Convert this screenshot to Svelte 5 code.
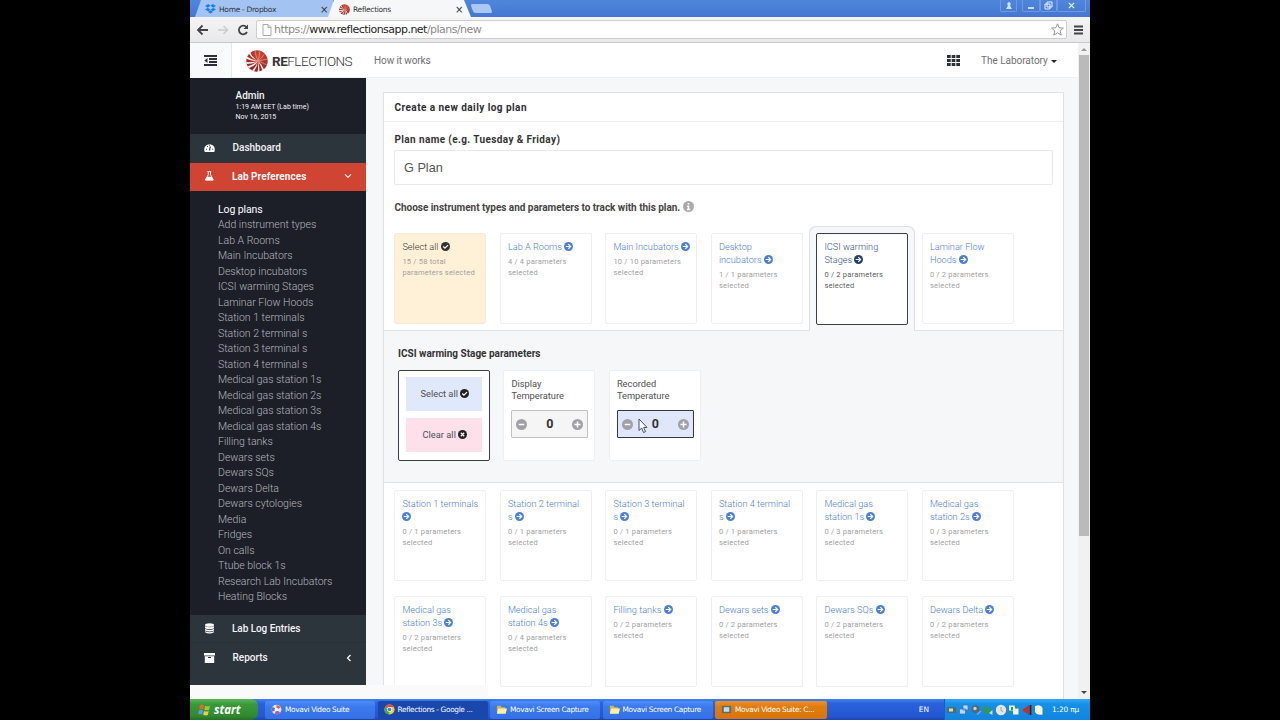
<script>
    const menu = [
        'Log plans', 'Add instrument types', 'Lab A Rooms', 'Main Incubators', 'Desktop incubators',
        'ICSI warming Stages', 'Laminar Flow Hoods', 'Station 1 terminals', 'Station 2 terminal s',
        'Station 3 terminal s', 'Station 4 terminal s', 'Medical gas station 1s', 'Medical gas station 2s',
        'Medical gas station 3s', 'Medical gas station 4s', 'Filling tanks', 'Dewars sets', 'Dewars SQs',
        'Dewars Delta', 'Dewars cytologies', 'Media', 'Fridges', 'On calls', 'Ttube block 1s',
        'Research Lab Incubators', 'Heating Blocks'
    ];

    // each title is split into the lines it wraps to
    const rows = [
        [
            { lines: ['Select all'], count: '15 / 58 total', rest: 'parameters selected', all: true },
            { lines: ['Lab A Rooms'], count: '4 / 4 parameters' },
            { lines: ['Main Incubators'], count: '10 / 10 parameters' },
            { lines: ['Desktop', 'incubators'], count: '1 / 1 parameters' },
            { lines: ['ICSI warming', 'Stages'], count: '0 / 2 parameters', open: true },
            { lines: ['Laminar Flow', 'Hoods'], count: '0 / 2 parameters' }
        ],
        [
            { lines: ['Station 1 terminals', ''], count: '0 / 1 parameters' },
            { lines: ['Station 2 terminal', 's'], count: '0 / 1 parameters' },
            { lines: ['Station 3 terminal', 's'], count: '0 / 1 parameters' },
            { lines: ['Station 4 terminal', 's'], count: '0 / 1 parameters' },
            { lines: ['Medical gas', 'station 1s'], count: '0 / 3 parameters' },
            { lines: ['Medical gas', 'station 2s'], count: '0 / 3 parameters' }
        ],
        [
            { lines: ['Medical gas', 'station 3s'], count: '0 / 2 parameters' },
            { lines: ['Medical gas', 'station 4s'], count: '0 / 4 parameters' },
            { lines: ['Filling tanks'], count: '0 / 2 parameters' },
            { lines: ['Dewars sets'], count: '0 / 2 parameters' },
            { lines: ['Dewars SQs'], count: '0 / 2 parameters' },
            { lines: ['Dewars Delta'], count: '0 / 2 parameters' }
        ]
    ];

    let params = $state([
        { name: 'Display', value: 0, hover: false },
        { name: 'Recorded', value: 0, hover: true }
    ]);

    let planName = $state('G Plan');
</script>

{#snippet dot(kind)}
    <svg class="dot" viewBox="0 0 16 16">
        <circle cx="8" cy="8" r="8" fill="currentColor" />
        {#if kind === 'arrow'}
            <path d="M3 8h8M7.6 3.8 11.8 8l-4.2 4.2" />
        {:else if kind === 'check'}
            <path d="M4 8l3 3 5.5-5.5" />
        {:else if kind === 'x'}
            <path d="M5 5l6 6M11 5l-6 6" />
        {:else if kind === 'minus'}
            <path d="M4 8h8" />
        {:else if kind === 'plus'}
            <path d="M3.5 8h9M8 3.5v9" />
        {:else}
            <path d="M8 3v2.2M6 7.5h2V12M5.7 12.2h4.8" />
        {/if}
    </svg>
{/snippet}

{#snippet logo()}
    <svg class="logo" viewBox="0 0 22 22">
        <defs>
            <radialGradient id="ball" cx=".6" cy=".25" r=".8">
                <stop offset="0" stop-color="#cf4a38" />
                <stop offset="1" stop-color="#8e1d1b" />
            </radialGradient>
        </defs>
        <circle cx="11" cy="11" r="10.7" fill="url(#ball)" />
        <path d="M12 11Q6 8 4 2L2.700 3.500Q6 9 12 11zM12 11Q5 9.500.8 6.500L0 8.500Q5 11 12 11zM12 11Q6 12.500.3 12L.6 14Q7 14 12 11zM12 11Q7 15 1.600 16.200L3 18Q9 16 12 11zM12 11Q10 17 6 20.500L8 21.500Q11 17 12 11zM12 11Q12.500 17 11.500 22H13.500Q13.500 16 12 11zM12 11Q15 16 16.500 20.500L18 19.500Q15.500 14 12 11z" fill="#fdf6f4" />
        <path d="M12 11Q9.500 6 9 .5M12 11Q13.500 6 14 .8M12 11Q16 8 18.500 3.800M12 11Q17 10 21.500 9M12 11Q17 13 21 15" stroke="#e9a093" stroke-width=".7" fill="none" />
    </svg>
{/snippet}

{#snippet folder()}
    <svg class="task-icon" viewBox="0 0 12 12">
        <path d="M1 2h4l1 1.500h4V10H1z" fill="#d9b44a" />
        <path d="M2.500 5H12l-1.500 5.500H1z" fill="#fff1a0" />
    </svg>
{/snippet}

{#snippet card(c)}
    <div class="card" class:all={c.all} class:open={c.open}>
        <div class="title">
            {#each c.lines as line, i}
                <div>{line}{#if i === c.lines.length - 1}{line ? ' ' : ''}{@render dot(c.all ? 'check' : 'arrow')}{/if}</div>
            {/each}
        </div>
        <div class="count">{c.count}<br />{c.rest ?? 'selected'}</div>
    </div>
{/snippet}

<div class="stage">
    <div class="screen">
        <div class="tabs">
            <div class="tab back">
                <svg width="11" height="10" viewBox="0 0 12 11"><path d="M3.500 0 6 2 3 4 0 2.200zM8.500 0 12 2.200 9 4 6 2zM0 6l3-2 3 2.200L3.500 8zM12 6 9 4 6 6.200 8.500 8zM3.200 8.700 6 7l2.800 1.700L6 10.500z" fill="#1c7fe0" /></svg>
                <span>Home - Dropbox</span>
                <b>×</b>
            </div>
            <div class="tab front">
                {@render logo()}
                <span>Reflections</span>
                <b>×</b>
            </div>
            <div class="newtab"></div>
            <div class="winbtns">
                <i><svg width="8" height="8" viewBox="0 0 8 8"><path d="M4 0a2 2 0 0 1 1 3.500L7 7H1l2-3.500A2 2 0 0 1 4 0z" fill="#cfe0fa" /></svg></i>
                <i class="wide"><svg width="8" height="8" viewBox="0 0 8 8"><path d="M1 6h6" stroke="#e8f0ff" stroke-width="1.600" /></svg></i>
                <i><svg width="9" height="9" viewBox="0 0 9 9"><path d="M3 1h5v5H3zM1 3h5v5H1z" stroke="#e8f0ff" fill="none" /></svg></i>
                <i class="last"><svg width="7" height="7" viewBox="0 0 8 8"><path d="M1 1l6 6M7 1 1 7" stroke="#e8f0ff" stroke-width="1.500" /></svg></i>
            </div>
        </div>

        <div class="toolbar">
            <svg width="60" height="14" viewBox="0 0 60 14" fill="none">
                <path d="M12 7H2M6.500 2.500 2 7l4.500 4.500" stroke="#444" stroke-width="1.800" />
                <path d="M22 7h9M27.500 3 31.500 7l-4 4" stroke="#ccc" stroke-width="1.600" />
                <path d="M50.500 4.200A4.300 4.300 0 1 0 51 9" stroke="#444" stroke-width="1.800" />
                <path d="M52 1.500V6h-4.500z" fill="#444" />
            </svg>
            <div class="url">
                <svg width="10" height="12" viewBox="0 0 10 12"><path d="M1 .5h5l3 3v8H1zM6 .5v3h3" fill="#fff" stroke="#aaa" /></svg>
                <span>https://<em>www.reflectionsapp.net</em>/plans/new</span>
                <svg class="star" width="13" height="13" viewBox="0 0 13 13"><path d="M6.500.8 8.200 4.800l4.200.3-3.200 2.800 1 4.200-3.700-2.300-3.700 2.300 1-4.200L.6 5.100l4.200-.3z" fill="#fff" stroke="#888" stroke-width=".9" /></svg>
            </div>
            <svg width="10" height="10" viewBox="0 0 10 10"><path d="M0 1.500h9M0 5h9M0 8.500h9" stroke="#444" stroke-width="2" /></svg>
        </div>

        <div class="page">
            <div class="site">
                <header>
                    <div class="toggle">
                        <svg width="13" height="11" viewBox="0 0 13 11"><path d="M0 1h13M5 4h8M5 7h8M0 10h13" stroke="#2d2f3d" stroke-width="1.800" /><path d="M3.500 3v5L.3 5.500z" fill="#2d2f3d" /></svg>
                    </div>
                    {@render logo()}
                    <div class="brand"><b>RE</b>FLECTIONS</div>
                    <a class="how" href="#how">How it works</a>
                    <svg class="grid" width="13" height="11" viewBox="0 0 13 11"><path d="M0 1.500h13M0 5.500h13M0 9.500h13" stroke="#2d2f3d" stroke-width="2.800" stroke-dasharray="3.700 .95" /></svg>
                    <div class="lab">The Laboratory</div>
                    <div class="caret"></div>
                </header>

                <div class="body">
                    <nav>
                        <div class="profile">
                            <b>Admin</b>
                            <span>1:19 AM EET (Lab time)</span>
                            <span>Nov 16, 2015</span>
                        </div>
                        <div class="item">
                            <svg width="11" height="10" viewBox="0 0 11 10"><path d="M.8 9A5.300 5.300 0 1 1 10.200 9z" fill="#fff" /><path d="M5.500 7.500 6.300 3.500" stroke="#2d353c" stroke-width="1.200" /><path d="M2 6.200h1M3 3.500h1M8.200 6.200h1M5 2.200h1" stroke="#2d353c" /></svg>
                            <span>Dashboard</span>
                        </div>
                        <div class="item active">
                            <svg width="11" height="10" viewBox="0 0 11 10"><path d="M3.200.3h4M4.300.5v3.200L1.300 9h8L6.500 3.700V.5" fill="none" stroke="#fff" /><path d="M3.300 5.800h4.200L9.300 9.300h-8z" fill="#fff" /></svg>
                            <span>Lab Preferences</span>
                            <svg class="arrow" width="8" height="6" viewBox="0 0 8 6"><path d="M1 1.300l3 3 3-3" stroke="#fff" stroke-width="1.100" fill="none" /></svg>
                        </div>
                        <ul>
                            {#each menu as entry, i}
                                <li class:current={i === 0}>{entry}</li>
                            {/each}
                        </ul>
                        <div class="item log">
                            <svg width="11" height="11" viewBox="0 0 11 11"><ellipse cx="5.500" cy="2" rx="4.500" ry="1.800" fill="#fff" /><path d="M1 3.200q4.500 2 9 0v2q-4.500 2-9 0zM1 6q4.500 2 9 0v1.400q-4.500 2-9 0zM1 8.300q4.500 2 9 0v1q-4.500 2.400-9 0z" fill="#fff" /></svg>
                            <span>Lab Log Entries</span>
                        </div>
                        <div class="item reports">
                            <svg width="11" height="10" viewBox="0 0 11 10"><path d="M0 0h11v2.600H0zM.8 3.200h9.400V10H.8z" fill="#fff" /><path d="M4 4.500h3" stroke="#2d353c" /></svg>
                            <span>Reports</span>
                            <svg class="arrow" width="6" height="8" viewBox="0 0 6 8"><path d="M4.500 1l-3 3 3 3" stroke="#fff" stroke-width="1.200" fill="none" /></svg>
                        </div>
                    </nav>

                    <main>
                        <section>
                            <h1>Create a new daily log plan</h1>
                            <div class="form">
                                <label for="plan">Plan name (e.g. Tuesday &amp; Friday)</label>
                                <input id="plan" bind:value={planName} />
                                <p>Choose instrument types and parameters to track with this plan. <span class="info">{@render dot('info')}</span></p>
                            </div>
                            <div class="cards first">
                                {#each rows[0] as c}{@render card(c)}{/each}
                            </div>
                            <div class="params">
                                <h2>ICSI warming Stage parameters</h2>
                                <div class="cards">
                                    <div class="card picks">
                                        <div class="pick yes">Select all {@render dot('check')}</div>
                                        <div class="pick no">Clear all {@render dot('x')}</div>
                                    </div>
                                    {#each params as p}
                                        <div class="card param">
                                            {p.name}<br />Temperature
                                            <div class="stepper" class:hover={p.hover}>
                                                <button aria-label="less" onclick={() => p.value--}>{@render dot('minus')}</button>
                                                <b>{p.value}</b>
                                                <button aria-label="more" onclick={() => p.value++}>{@render dot('plus')}</button>
                                            </div>
                                        </div>
                                    {/each}
                                </div>
                            </div>
                            <div class="cards second">
                                {#each rows[1] as c}{@render card(c)}{/each}
                            </div>
                            <div class="cards">
                                {#each rows[2] as c}{@render card(c)}{/each}
                            </div>
                        </section>
                    </main>
                </div>
            </div>
            <div class="scroll">
                <div class="up"></div>
                <div class="thumb"></div>
                <div class="down"></div>
            </div>
            <div class="status"></div>
        </div>

        <footer>
            <div class="start">
                <svg width="13" height="12" viewBox="0 0 13 12"><path d="M2 1q2.200-1 4 .3L5.200 5.500Q3.500 4.500 1.200 5.300z" fill="#f0622d" /><path d="M7 1.800q2.500 1 5 0L11 6q-2.500.8-4.700-.2z" fill="#8fce3c" /><path d="M1 6.300q2-1 4 .3L4.200 10.500Q2.500 9.500.2 10.300z" fill="#5c9bf5" /><path d="M6 7q2.500 1 4.800 0L9.800 11Q7.500 12 5.200 10.800z" fill="#fbc83a" /></svg>
                <span>start</span>
            </div>
            <div class="task t1">
                <svg class="task-icon" viewBox="0 0 12 12"><circle cx="6" cy="6" r="5.300" fill="#e8e4f4" /><path d="M6 6V1a5 5 0 0 1 4.500 3z" fill="#e0603a" /><path d="M6 6 1.500 8.500A5 5 0 0 1 2 3z" fill="#5577cc" /><path d="M6 6l4 3.500A5 5 0 0 1 4 10.700z" fill="#a85ab0" /><circle cx="6" cy="6" r="2" fill="#fff" /></svg>
                <span>Movavi Video Suite</span>
            </div>
            <div class="task t2">
                <svg class="task-icon" viewBox="0 0 12 12"><circle cx="6" cy="6" r="5.500" fill="#f6cc38" /><path d="M6 6 1.200 3.300A5.500 5.500 0 0 1 10.800 3.300L6 3.500z" fill="#e04a3a" /><path d="M6 8 1.200 3.300A5.500 5.500 0 0 0 5.500 11.500z" fill="#3fa653" /><circle cx="6" cy="6" r="2.700" fill="#fff" /><circle cx="6" cy="6" r="2" fill="#3d7fe8" /></svg>
                <span>Reflections - Google ...</span>
            </div>
            <div class="task t3">{@render folder()}<span>Movavi Screen Capture</span></div>
            <div class="task t4">{@render folder()}<span>Movavi Screen Capture</span></div>
            <div class="task t5">
                <svg class="task-icon" viewBox="0 0 12 12"><path d="M1 2h10v8H1z" fill="#5a6a70" /><path d="M3 3.500h6v5H3z" fill="#bde0e4" /></svg>
                <span>Movavi Video Suite: C...</span>
            </div>
            <div class="lang">EN</div>
            <div class="tray">
                <svg width="102" height="12" viewBox="0 0 102 12">
                    <path d="M2 3h9v6H2z" fill="#4d6b70" /><path d="M4 4.500h4v3H4z" fill="#e6d9a0" />
                    <path d="M18 1h5v5h-5zM14.500 5h6v5h-6z" fill="#b9d9f5" stroke="#3f75b8" stroke-width=".8" />
                    <circle cx="30.500" cy="5" r="3.900" fill="#59656f" /><circle cx="30" cy="4.500" r="1.700" fill="#c9d3da" /><path d="M32 10.500l4-3.500" stroke="#8fa4b4" stroke-width="1.600" />
                    <path d="M40 1l3 3 2-1 1 6-5 1-3-4z" fill="#2f9a4b" /><path d="M44 9l3.500-3v5z" fill="#c9d8d8" />
                    <circle cx="56" cy="6" r="5.200" fill="#e9e4dc" /><path d="M56 3v3.500l2 1" stroke="#a99" fill="none" />
                    <path d="M64 1.500h6v5h-6zM68 4.500h5.500v6H68z" fill="#e9f6e8" /><path d="M65.500 7l2 3M70 2l2 2M67 3v3" stroke="#37984a" stroke-width="2" />
                    <path d="M84 1v10l-7-5z" fill="#c62f22" /><path d="M85.500 1v10" stroke="#33202a" stroke-width="1.800" />
                    <path d="M90 2q6-2 7.500 2v6.500q-6 1-7.500-3z" fill="#f6fbd8" />
                </svg>
                <span>1:20 πμ</span>
            </div>
        </footer>

        <svg class="cursor" width="10" height="16" viewBox="0 0 10 16"><path d="M1 1v11.500l2.700-2.500L5.500 14.500l2-.9L5.700 9.400H9z" fill="#fff" stroke="#333a55" stroke-width=".9" /></svg>
    </div>
</div>

<style>
    :global(body) {
        background: #000;
    }
    .stage {
        display: flex;
        justify-content: center;
        width: 1280px;
        height: 720px;
        background: #000;
        overflow: hidden;
        font-family: Roboto, "Liberation Sans", sans-serif;
    }
    .stage * {
        box-sizing: border-box;
    }
    .screen {
        position: relative;
        display: flex;
        flex-direction: column;
        width: 900px;
        height: 720px;
        background: #fff;
    }
    svg {
        display: block;
        flex: none;
    }

    /* browser */
    .tabs {
        display: flex;
        height: 17px;
        padding-left: 5px;
        background: linear-gradient(#4f86dc, #4577cf);
        font: 7.500px "DejaVu Sans", sans-serif;
        letter-spacing: -0.3px;
    }
    .tab {
        display: flex;
        align-items: center;
        height: 17px;
        color: #333;
        white-space: nowrap;
    }
    .tab b {
        margin-left: auto;
        font-size: 10px;
        font-weight: 400;
    }
    .back {
        width: 138px;
        padding: 1px 5px 0 10px;
        background: #a3c3f3;
        clip-path: polygon(6px 0, 100% 0, 100% 100%, 0 100%);
    }
    .back svg {
        margin-right: 3px;
    }
    .front {
        width: 143px;
        margin-left: -5px;
        padding: 1px 8px 0 11px;
        background: #f6f7f9;
        clip-path: polygon(6px 0, 136px 0, 100% 100%, 0 100%);
    }
    .front .logo {
        width: 11px;
        height: 11px;
        margin-right: 3px;
    }
    .newtab {
        width: 19px;
        height: 9px;
        margin: 4px 0 0 1px;
        background: #a9c8f7;
        border-radius: 2px;
        transform: skewX(20deg);
    }
    .winbtns {
        display: flex;
        margin-left: auto;
        margin-right: 4px;
    }
    .winbtns i {
        display: flex;
        align-items: center;
        justify-content: center;
        width: 17px;
        height: 12px;
        border: 1px solid #6f99e0;
        border-top: 0;
        border-radius: 0 0 2px 2px;
    }
    .winbtns .wide {
        margin-left: 5px;
        width: 18px;
    }
    .winbtns .last {
        width: 29px;
    }
    .toolbar {
        display: flex;
        align-items: center;
        height: 26px;
        padding: 0 6px;
        background: linear-gradient(#f4f4f5, #e9e9eb);
        border-bottom: 1px solid #c9c9cc;
    }
    .url {
        display: flex;
        align-items: center;
        flex: none;
        width: 811px;
        height: 19px;
        margin-right: 7px;
        padding: 0 2px 0 5px;
        background: #fff;
        border: 1px solid #cdcdcf;
        border-radius: 2px;
        font: 11px "DejaVu Sans", sans-serif;
        color: #8a8a8a;
        letter-spacing: -0.530px;
    }
    .url span {
        margin-left: 2px;
    }
    .url em {
        font-style: normal;
        color: #222;
    }
    .star {
        margin-left: auto;
    }

    /* page */
    .page {
        position: relative;
        display: flex;
        height: 656px;
    }
    .site {
        width: 888px;
        background: #f6f7f9;
    }
    .scroll {
        display: flex;
        flex-direction: column;
        align-items: center;
        width: 12px;
        background: #f1f1f1;
    }
    .up {
        margin: 5px 0 4px;
        border: 3px solid transparent;
        border-top: 0;
        border-bottom-color: #999;
    }
    .thumb {
        width: 10px;
        height: 481px;
        background: #bababa;
    }
    .down {
        margin: auto 0 5px;
        border: 3px solid transparent;
        border-bottom: 0;
        border-top-color: #444;
    }
    .status {
        position: absolute;
        left: 0;
        bottom: 0;
        width: 298px;
        height: 14px;
        background: #fafafb;
    }
    header {
        display: flex;
        align-items: center;
        height: 35px;
        background: #fff;
        border-bottom: 1px solid #eff0f3;
    }
    .toggle {
        display: flex;
        align-items: center;
        justify-content: center;
        width: 42px;
        height: 35px;
        background: #f8f9fb;
        border-right: 1px solid #e4e6ea;
    }
    header .logo {
        width: 22px;
        height: 22px;
        margin: 2px 4px 0 14px;
    }
    .brand {
        width: 102px;
        padding-top: 1px;
        font-size: 13.500px;
        font-weight: 300;
        color: #333;
        letter-spacing: -0.500px;
    }
    .brand b {
        font-weight: 700;
    }
    .how {
        margin-top: 1px;
        color: #707070;
        font-size: 10px;
        letter-spacing: -0.1px;
        text-decoration: none;
    }
    .grid {
        margin: 0 21px 0 auto;
    }
    .lab {
        width: 70px;
        margin-top: 1px;
        font-size: 10px;
        color: #707070;
        letter-spacing: -0.030px;
        white-space: nowrap;
    }
    .caret {
        margin: 3px 21px 0 0;
        border: 3px solid transparent;
        border-bottom: 0;
        border-top-color: #222;
    }
    .body {
        display: flex;
        height: 621px;
        overflow: hidden;
    }

    /* sidebar */
    nav {
        flex: none;
        width: 176px;
        height: 607px;
        background: #1c1f27;
        color: #f4f4f6;
    }
    .profile {
        display: flex;
        flex-direction: column;
        height: 56px;
        padding: 11px 0 0 45.500px;
        font-size: 7px;
        line-height: 10px;
    }
    .profile b {
        font-size: 10px;
        font-weight: 500;
        line-height: 13px;
    }
    .item {
        display: flex;
        align-items: center;
        height: 29px;
        padding: 0 14px 2px;
        background: #2d353c;
        font-size: 10px;
        font-weight: 500;
    }
    .item span {
        margin-left: 17.500px;
    }
    .active {
        height: 28px;
        background: #d04434;
        font-weight: 700;
    }
    .active span {
        margin-left: 17px;
        letter-spacing: 0.060px;
    }
    .arrow {
        margin-left: auto;
    }
    ul {
        height: 424px;
        margin: 0;
        padding: 11px 0 0 28px;
        list-style: none;
        font-size: 10.500px;
        font-weight: 300;
        line-height: 15.480px;
        color: #b4b7bd;
    }
    .current {
        color: #fff;
        font-weight: 400;
        letter-spacing: -0.1px;
    }
    .log {
        height: 28px;
        padding-bottom: 0;
        border-bottom: 1px solid #28303a;
    }
    .log span {
        margin-left: 17px;
        letter-spacing: -0.060px;
    }
    .reports {
        height: 42px;
        padding-bottom: 13px;
    }

    /* plan form */
    main {
        padding: 14px 14px 0 17px;
    }
    section {
        width: 681px;
        height: 640px;
        background: #fff;
        border: 1px solid #dfe1e7;
    }
    h1 {
        height: 29px;
        margin: 0;
        padding: 0 10.500px;
        border-bottom: 1px solid #eceef1;
        font-size: 10px;
        line-height: 29px;
        letter-spacing: 0.450px;
        color: #2c2c33;
    }
    .form {
        display: flex;
        flex-direction: column;
        height: 104px;
        padding: 12px 10px 0;
        font-size: 10px;
        font-weight: 700;
        color: #333;
    }
    label {
        height: 16px;
        padding-left: 0.500px;
        letter-spacing: 0.380px;
    }
    input {
        width: 659px;
        height: 35px;
        padding: 0 9px;
        border: 1px solid #e8e9ec;
        border-radius: 2px;
        font: 12.700px "Liberation Sans", sans-serif;
        color: #555;
    }
    p {
        margin: 16px 0 0 0.500px;
        letter-spacing: -0.030px;
        color: #444;
        white-space: nowrap;
    }
    .info .dot {
        width: 11px;
        height: 11px;
        color: #aaa;
    }
    .dot {
        display: inline-block;
        width: 9px;
        height: 9px;
        vertical-align: -1px;
    }
    .dot path {
        fill: none;
        stroke: #fff;
        stroke-width: 2.200;
    }
    .cards {
        display: flex;
        gap: 13.500px;
        height: 91px;
        margin: 0 0 0 10.400px;
    }
    .card {
        flex: none;
        width: 92px;
        height: 91px;
        padding: 6px 7px;
        background: #fff;
        border: 1px solid #eeeff2;
        border-radius: 2px;
        white-space: nowrap;
    }
    .title {
        font-size: 9.200px;
        line-height: 13px;
        color: #4a80d8;
        font-weight: 300;
    }
    .title .dot {
        color: #4a80d8;
    }
    .count {
        margin-top: 4px;
        font-size: 7.500px;
        line-height: 10.500px;
        letter-spacing: 0.220px;
        color: #a0a0a0;
    }
    .all {
        background: #fff1d8;
        border-color: #f6ead4;
    }
    .all .title,
    .all .dot {
        color: #333;
    }
    .first {
        height: 104px;
        padding-top: 7px;
    }
    .open {
        height: 92px;
        border: 1px solid #3b3d4a;
        box-shadow:
            0 0 0 6px #f6f7f9,
            0 12px 0 6px #f6f7f9,
            0 0 0 7px #dfe1e7,
            0 12px 0 7px #dfe1e7;
        clip-path: inset(-8px -8px -6px -8px);
    }
    .open .title {
        color: #34508c;
    }
    .open .dot {
        color: #24406a;
    }
    .open .count {
        color: #606060;
    }
    .params {
        height: 153px;
        padding: 17px 0 0 3.500px;
        background: #f6f7f9;
        border: 1px solid #dfe1e7;
        border-width: 1px 0;
    }
    h2 {
        height: 22px;
        margin: 0 0 0 10.500px;
        font-size: 10px;
        line-height: 12px;
        color: #333;
    }
    .params .card {
        font-size: 9.300px;
        line-height: 12.500px;
        color: #505050;
    }
    .params .param {
        padding-top: 6.500px;
    }
    .params .picks {
        display: flex;
        flex-direction: column;
        gap: 7px;
        padding: 6px 7px;
        border-color: #3b3d4a;
    }
    .pick {
        height: 34px;
        padding-left: 2px;
        line-height: 33px;
        text-align: center;
    }
    .pick .dot {
        color: #222;
    }
    .yes {
        background: #e0e8fb;
    }
    .no {
        background: #fde0ea;
    }
    .stepper {
        display: flex;
        align-items: center;
        justify-content: space-between;
        width: 77px;
        height: 28px;
        margin-top: 7.500px;
        padding: 0 4px;
        background: #f5f5f6;
        border: 1px solid #c2c2c6;
        border-radius: 1px;
    }
    .stepper b {
        font-size: 12.500px;
        color: #333;
    }
    .stepper button {
        display: flex;
        padding: 0;
        border: 0;
        background: none;
    }
    .stepper .dot {
        width: 11px;
        height: 11px;
        color: #a0a0a6;
    }
    .stepper.hover {
        background: #e0e6fb;
        border-color: #33354a;
    }
    .second {
        height: 113px;
        padding-top: 7px;
    }

    /* taskbar */
    footer {
        display: flex;
        align-items: center;
        height: 21px;
        background: linear-gradient(#3f83ee 0, #2a62dc 20%, #2456d0 85%, #1c44a8);
        font: 7.400px "DejaVu Sans", sans-serif;
        letter-spacing: -0.350px;
        color: #fff;
    }
    .start {
        display: flex;
        align-items: center;
        gap: 3px;
        width: 68px;
        height: 21px;
        padding-left: 8px;
        background: linear-gradient(#5cb45c, #3a9a3a 25%, #2f8a2f 80%, #256f25);
        border-radius: 0 7px 7px 0;
        font: italic 700 11.500px "Open Sans", sans-serif;
        letter-spacing: 0;
    }
    .task {
        display: flex;
        align-items: center;
        gap: 3px;
        flex: none;
        width: 110px;
        height: 18px;
        margin-right: 2.500px;
        padding-left: 6px;
        background: linear-gradient(#4d8df8, #3c7bee 30%, #3470e4);
        border-radius: 2px;
        white-space: nowrap;
    }
    .task-icon {
        width: 11px;
        height: 11px;
    }
    .t1 {
        margin-left: 7px;
    }
    .t2 {
        background: #1a47ab;
    }
    .t5 {
        width: 112px;
        background: linear-gradient(#ee9030, #e07c10 30%, #d87408);
    }
    .lang {
        margin-left: auto;
        margin-right: 15px;
        letter-spacing: 0;
    }
    .tray {
        display: flex;
        align-items: center;
        width: 146px;
        height: 21px;
        padding-left: 0;
        background: linear-gradient(#35a8f5, #1590e8 25%, #1284dc);
        border-left: 1px solid #1a5fc0;
    }
    .tray span {
        margin-left: 5px;
        letter-spacing: -0.150px;
    }

    .cursor {
        position: absolute;
        left: 448px;
        top: 418px;
    }
</style>
